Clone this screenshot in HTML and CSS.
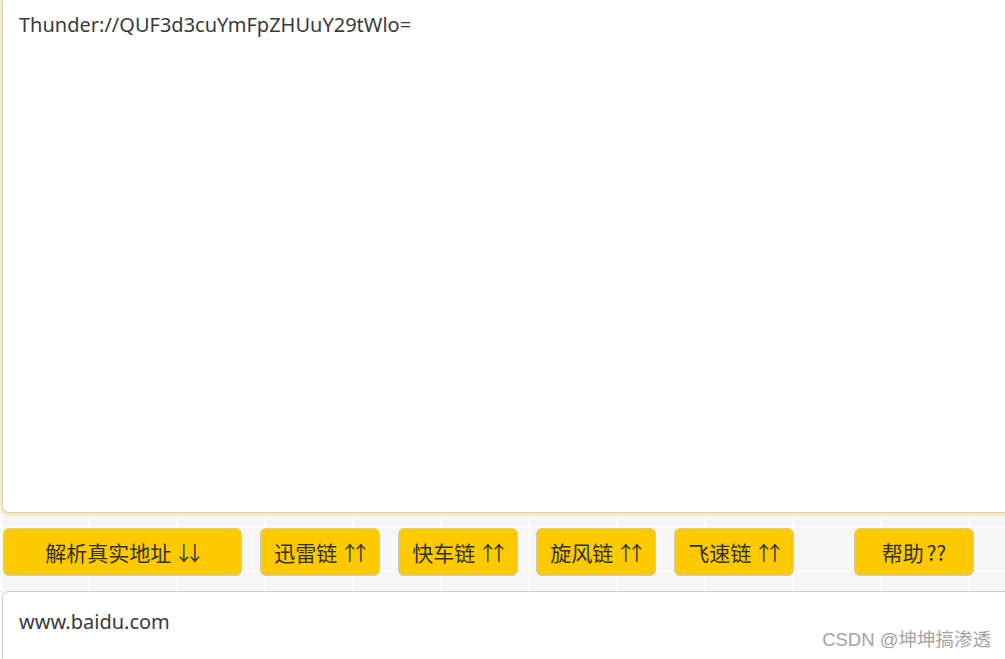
FILE: index.html
```html
<!DOCTYPE html>
<html lang="zh-CN">
<head>
<meta charset="utf-8">
<title>Thunder 链接转换</title>
<link rel="stylesheet" href="styles.css">
</head>
<body>
<div class="page">
  <div class="box box-top">Thunder://QUF3d3cuYmFpZHUuY29tWlo=</div>
  <div class="toolbar">
    <button class="btn btn-wide">解析真实地址 <span class="arrows">↓↓</span></button>
    <button class="btn">迅雷链 <span class="arrows">↑↑</span></button>
    <button class="btn">快车链 <span class="arrows">↑↑</span></button>
    <button class="btn">旋风链 <span class="arrows">↑↑</span></button>
    <button class="btn">飞速链 <span class="arrows">↑↑</span></button>
    <button class="btn btn-help">帮助 ??</button>
  </div>
  <div class="box box-bottom">www.baidu.com</div>
  <div class="watermark">CSDN @坤坤搞渗透</div>
</div>
</body>
</html>
```

FILE: styles.css
```css
html, body {
  margin: 0;
  padding: 0;
  overflow: hidden;
}
body {
  width: 1005px;
  height: 659px;
  background-color: #f6f6f6;
  background-image:
    linear-gradient(90deg, rgba(255,255,255,0.5) 0, rgba(255,255,255,0.5) 3px, transparent 3px),
    linear-gradient(0deg, rgba(255,255,255,0.35) 0, rgba(255,255,255,0.35) 2px, transparent 2px);
  background-size: 88px 100%, 100% 44px;
  font-family: "Noto Sans", "Noto Sans CJK SC", sans-serif;
  color: #333;
}
.page {
  position: relative;
  height: 659px;
  padding-left: 2px;
  box-sizing: border-box;
}
.box {
  width: 1030px;
  background: #fff;
  border: 1px solid #cfcfcf;
  box-sizing: border-box;
  font-size: 20px;
  line-height: 26px;
  color: #3a3a3a;
  padding-left: 16px;
}
.box-top {
  height: 513px;
  border-top: none;
  border-radius: 0 0 7px 7px;
  padding-top: 12px;
  box-shadow: 0 0 4px 1px rgba(255, 214, 60, 0.75);
}
.toolbar {
  display: flex;
  gap: 18px;
  margin-top: 15px;
  padding-left: 1px;
}
.btn {
  width: 120px;
  height: 48px;
  background: #fdc900;
  border: 1px solid #cbcbc0;
  border-radius: 6px;
  font-family: "Noto Sans CJK SC", "Noto Sans", sans-serif;
  font-size: 21px;
  color: #333;
  padding: 0;
  margin: 0;
  word-spacing: -2px;
}
.arrows {
  font-family: "Noto Sans CJK SC", sans-serif;
  font-size: 20px;
  letter-spacing: -9px;
  margin-right: 4px;
  color: #2f3a2a;
}
.btn-wide {
  width: 239px;
}
.btn-help {
  margin-left: 42px;
}
.box-bottom {
  margin-top: 15px;
  height: 80px;
  border-radius: 7px 0 0 0;
  padding-top: 17px;
}
.watermark {
  position: absolute;
  right: 14px;
  bottom: 8px;
  font-family: "Liberation Sans", "Noto Sans CJK SC", sans-serif;
  font-size: 18.5px;
  color: #a3a3a3;
}
```
